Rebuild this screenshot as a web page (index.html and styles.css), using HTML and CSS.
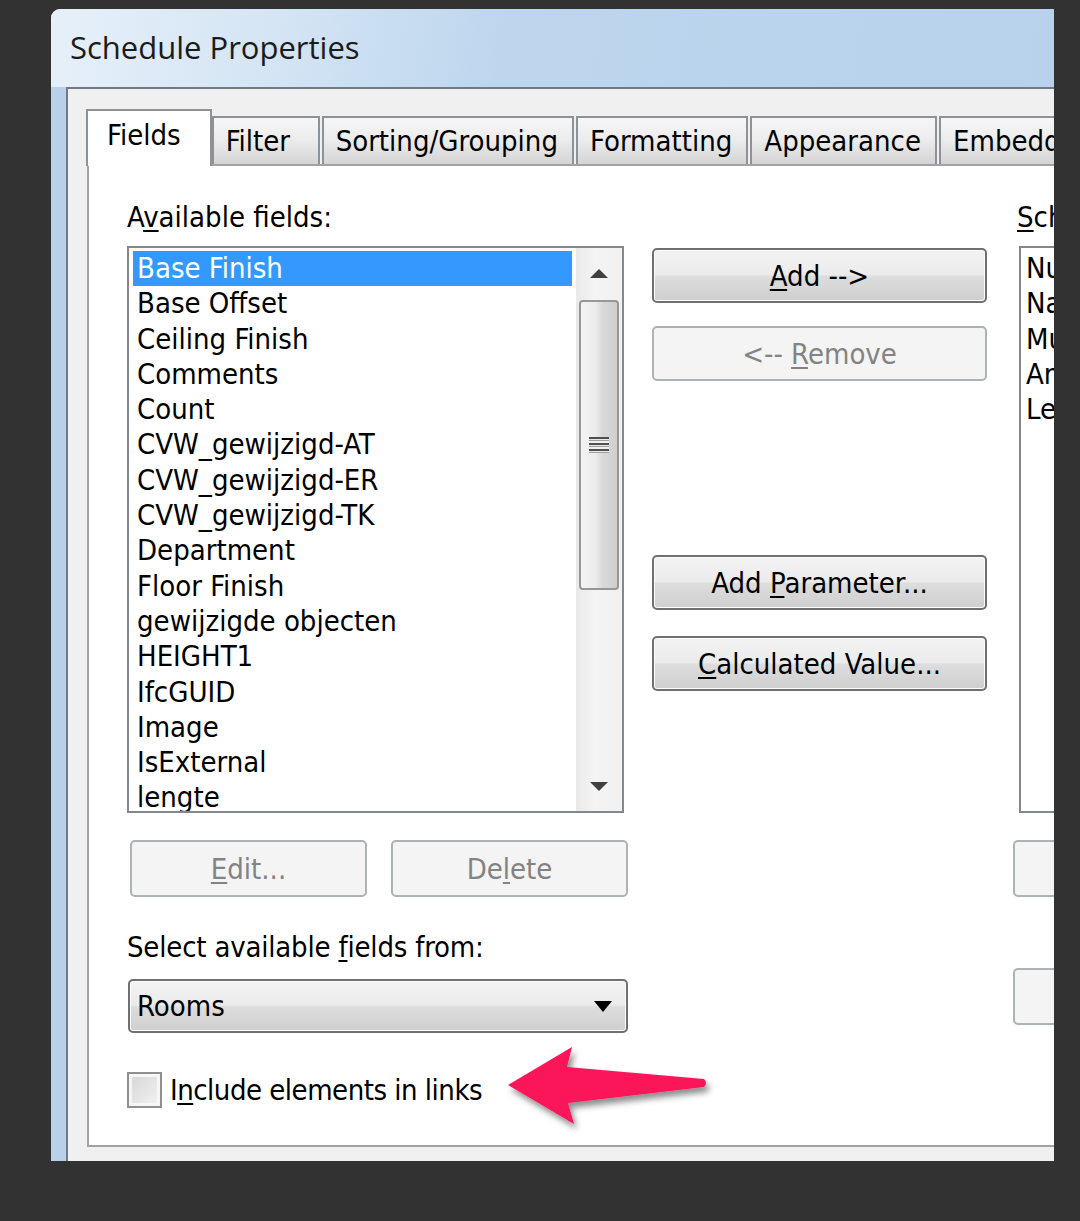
FILE: index.html
```html
<!DOCTYPE html>
<html lang="en">
<head>
    <meta charset="UTF-8">
    <meta name="viewport" content="width=device-width, initial-scale=1.0">
    <title>Schedule Properties</title>
    <link rel="stylesheet" href="styles.css">
</head>
<body>
    <div class="window">
        <div class="title-bar">Schedule Properties</div>

        <div class="client">
            <!-- Tab strip -->
            <div class="tabs">
                <div class="tab active">Fields</div>
                <div class="tab">Filter</div>
                <div class="tab">Sorting/Grouping</div>
                <div class="tab">Formatting</div>
                <div class="tab">Appearance</div>
                <div class="tab">Embedded Schedule</div>
            </div>

            <div class="panel">
                <!-- Available fields -->
                <div class="col col-left">
                    <div class="label">A<u>v</u>ailable fields:</div>
                    <div class="listbox">
                        <div class="items">
                            <div class="item selected">Base Finish</div>
                            <div class="item">Base Offset</div>
                            <div class="item">Ceiling Finish</div>
                            <div class="item">Comments</div>
                            <div class="item">Count</div>
                            <div class="item">CVW_gewijzigd-AT</div>
                            <div class="item">CVW_gewijzigd-ER</div>
                            <div class="item">CVW_gewijzigd-TK</div>
                            <div class="item">Department</div>
                            <div class="item">Floor Finish</div>
                            <div class="item">gewijzigde objecten</div>
                            <div class="item">HEIGHT1</div>
                            <div class="item">IfcGUID</div>
                            <div class="item">Image</div>
                            <div class="item">IsExternal</div>
                            <div class="item">lengte</div>
                        </div>
                        <div class="scrollbar">
                            <div class="scroll-btn">
                                <svg width="18" height="9" viewBox="0 0 18 9"><path d="M9 0 L18 9 L0 9 Z" fill="#404040"/></svg>
                            </div>
                            <div class="thumb"><span class="grip"></span></div>
                            <div class="track"></div>
                            <div class="scroll-btn">
                                <svg width="18" height="9" viewBox="0 0 18 9"><path d="M0 0 L18 0 L9 9 Z" fill="#404040"/></svg>
                            </div>
                        </div>
                    </div>

                    <div class="button-row">
                        <button class="btn disabled"><u>E</u>dit...</button>
                        <button class="btn disabled">De<u>l</u>ete</button>
                    </div>

                    <div class="label label-from">Select available <u>f</u>ields from:</div>
                    <div class="dropdown">
                        <span>Rooms</span>
                        <svg width="18" height="11" viewBox="0 0 18 11"><path d="M0 0 L18 0 L9 11 Z" fill="#000"/></svg>
                    </div>

                    <div class="check">
                        <span class="box"></span>
                        <span>I<u>n</u>clude elements in links</span>
                    </div>
                </div>

                <!-- Add / remove buttons -->
                <div class="col col-mid">
                    <button class="btn"><u>A</u>dd --&gt;</button>
                    <button class="btn disabled btn-remove">&lt;-- <u>R</u>emove</button>
                    <button class="btn btn-param">Add <u>P</u>arameter...</button>
                    <button class="btn btn-calc"><u>C</u>alculated Value...</button>
                </div>

                <!-- Scheduled fields -->
                <div class="col col-right">
                    <div class="label"><u>S</u>cheduled fields (in order):</div>
                    <div class="listbox listbox-right">
                        <div class="items">
                            <div class="item">Number</div>
                            <div class="item">Name</div>
                            <div class="item">Muur Afwerking</div>
                            <div class="item">Area</div>
                            <div class="item">Level</div>
                        </div>
                    </div>
                    <div class="button-row">
                        <button class="btn disabled">Edit...</button>
                        <button class="btn disabled">Delete</button>
                    </div>
                    <div class="button-row row-move">
                        <button class="btn disabled">Move Up</button>
                        <button class="btn disabled">Move Down</button>
                    </div>
                </div>
            </div>
        </div>
    </div>

    <!-- Callout arrow -->
    <svg class="callout" width="230" height="100" viewBox="0 0 230 100">
        <defs>
            <filter id="shadow" x="-20%" y="-30%" width="140%" height="170%">
                <feDropShadow dx="3" dy="5" stdDeviation="3" flood-color="#000" flood-opacity="0.45"/>
            </filter>
        </defs>
        <path d="M8 45 L72 7 L67 27 L204 39 Q208 43 204 47 L68 63 L74 84 Z" fill="#fa1558" filter="url(#shadow)"/>
    </svg>
</body>
</html>
```

FILE: styles.css
```css
/* Reset */
* {
    margin: 0;
    padding: 0;
    box-sizing: border-box;
}

body {
    background: #323232;
    padding: 9px 0 0 51px;
    height: 1221px;
    overflow: hidden;
    font-family: "DejaVu Sans Condensed", "DejaVu Sans", sans-serif;
    font-size: 29px;
    color: #000;
    position: relative;
}

u {
    text-decoration-thickness: 2px;
    text-underline-offset: 3px;
}

/* Window frame */
.window {
    width: 1003px;
    background: #b8d0e9;
    border-top-left-radius: 9px;
    overflow: hidden;
}

.title-bar {
    height: 78px;
    padding: 19px 0 0 19px;
    line-height: 38px;
    font-family: "Open Sans", "Noto Sans", sans-serif;
    font-size: 31px;
    color: #1b1b1b;
    background: linear-gradient(100deg, #e6f0fa 0%, #d5e5f4 22%, #bdd6ee 45%, #b8d2ec 100%);
}

.client {
    margin-left: 15px;
    border-top: 2px solid #6f7a86;
    border-left: 2px solid #6f7a86;
    background: #f0f0f0;
    padding: 20px 0 14px 19px;
}

/* Tabs */
.tabs {
    display: flex;
    align-items: flex-end;
    gap: 2px;
    white-space: nowrap;
}

.tab {
    flex-shrink: 0;
    height: 48px;
    min-width: 108px;
    padding: 0 14px 0 12px;
    line-height: 46px;
    border: 2px solid #8d9198;
    border-bottom: none;
    background: linear-gradient(#f7f7f7, #ebebeb 50%, #d4d4d4);
}

.tab.active {
    height: 57px;
    margin-left: -1px;
    margin-bottom: -2px;
    margin-right: -2px;
    padding: 0 29px 0 19px;
    line-height: 48px;
    background: #fff;
    position: relative;
    z-index: 1;
}

/* Tab page */
.panel {
    width: 1100px;
    border: 2px solid #a2a2a2;
    border-right: none;
    background: #fff;
    display: flex;
    padding: 36px 0 37px 38px;
}

.col {
    display: flex;
    flex-direction: column;
    align-items: flex-start;
}

.col-left {
    width: 501px;
}

.col-mid {
    width: 335px;
    margin-left: 24px;
    padding-top: 46px;
}

.col-right {
    width: 500px;
    margin-left: 26px;
}

.label {
    height: 30px;
    line-height: 30px;
    white-space: nowrap;
}

.col-right .label {
    padding-left: 4px;
}

/* List boxes */
.listbox {
    margin-top: 14px;
    width: 497px;
    height: 567px;
    border: 2px solid #828790;
    display: flex;
    background: #fff;
}

.listbox-right {
    margin-left: 6px;
    width: 480px;
}

.items {
    flex: 1;
    padding: 3px 4px 0;
    overflow: hidden;
}

.listbox-right .items {
    padding-left: 1px;
}

.item {
    height: 35.3px;
    line-height: 35.3px;
    padding-left: 4px;
    white-space: nowrap;
}

.item.selected {
    background: #3399ff;
    color: #fff;
}

.scrollbar {
    width: 46px;
    display: flex;
    flex-direction: column;
    background: linear-gradient(90deg, #e9e9e9, #f4f4f4 40%, #f1f1f1);
}

.scroll-btn {
    height: 50px;
    display: flex;
    align-items: center;
    justify-content: center;
}

.thumb {
    height: 290px;
    margin: 2px 3px 0;
    border: 2px solid #979797;
    border-radius: 4px;
    background: linear-gradient(90deg, #f4f4f4 0%, #ececec 40%, #d9d9d9 60%, #cfcfcf 100%);
    display: flex;
    align-items: center;
    justify-content: center;
}

.grip {
    width: 20px;
    height: 16px;
    background: repeating-linear-gradient(#4f4f4f 0 2px, #e8e8e8 2px 3px, #a0a0a0 3px 4px, #f0f0f0 4px 6px);
}

.track {
    flex: 1;
}

/* Buttons */
.btn {
    width: 335px;
    height: 55px;
    font: inherit;
    color: #000;
    border: 2px solid #707070;
    border-radius: 5px;
    background: linear-gradient(#f3f3f3, #ebebeb 48%, #dddddd 52%, #cfcfcf);
    box-shadow: inset 0 0 0 1px #fcfcfc;
    cursor: default;
}

.btn.disabled {
    color: #838383;
    border-color: #adb2b5;
    background: #f4f4f4;
    box-shadow: none;
}

.btn-remove {
    margin-top: 23px;
}

.btn-param {
    margin-top: 174px;
}

.btn-calc {
    margin-top: 26px;
}

.button-row {
    margin-top: 27px;
    display: flex;
    gap: 24px;
    padding-left: 3px;
}

.button-row .btn {
    width: 237px;
    height: 57px;
}

.col-right .button-row {
    padding-left: 0;
}

.row-move {
    margin-top: 71px;
}

/* Dropdown */
.label-from {
    margin-top: 35px;
    letter-spacing: -0.2px;
}

.dropdown {
    margin-top: 17px;
    margin-left: 1px;
    width: 500px;
    height: 54px;
    border: 2px solid #707070;
    border-radius: 5px;
    background: linear-gradient(#f3f3f3, #ebebeb 48%, #dddddd 52%, #cfcfcf);
    box-shadow: inset 0 0 0 1px #fcfcfc;
    display: flex;
    align-items: center;
    justify-content: space-between;
    padding: 0 14px 0 7px;
}

/* Checkbox */
.check {
    margin-top: 39px;
    height: 36px;
    display: flex;
    align-items: center;
    gap: 8px;
    white-space: nowrap;
    letter-spacing: -0.5px;
}

.box {
    width: 35px;
    height: 36px;
    border: 2px solid #8f8f8f;
    background: linear-gradient(135deg, #d4d4d4, #f4f4f4);
    box-shadow: inset 0 0 0 3px #f6f6f6;
}

/* Callout arrow over the dialog */
.callout {
    position: absolute;
    left: 500px;
    top: 1040px;
}
```
